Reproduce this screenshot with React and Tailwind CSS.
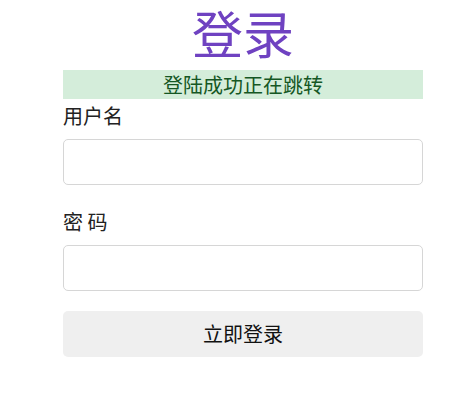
export default function App() {
  return (
    <div
      className="min-h-screen w-full bg-white"
      style={{ fontFamily: '"Noto Sans CJK SC", "Noto Sans", sans-serif' }}
    >
      <div className="ml-[63px] w-[360px]">
        {/* title sits a little high, like the original page */}
        <h1 className="mb-[6px] text-center text-[51px] leading-[64px] text-[#6f42c1]">登录</h1>

        <div className="h-[29px] bg-[#d4edda] text-center text-[20px] leading-[30px] text-[#155724]">
          登陆成功正在跳转
        </div>

        <form className="flex flex-col">
          <label className="mt-[5px] h-[24px] text-[20px] leading-[24px] text-[#222]">用户名</label>
          <input
            type="text"
            className="mt-[11px] h-[46px] w-full rounded-[5px] border border-[#d6d6d6] bg-white px-3 outline-none"
          />

          <label className="mt-[25px] h-[24px] text-[20px] leading-[24px] text-[#222]">密 码</label>
          <input
            type="password"
            className="mt-[11px] h-[46px] w-full rounded-[5px] border border-[#d6d6d6] bg-white px-3 outline-none"
          />

          <button
            type="button"
            className="mt-[20px] h-[46px] w-full rounded-[5px] bg-[#efefef] text-[20px] text-[#111]"
          >
            立即登录
          </button>
        </form>
      </div>
    </div>
  );
}
